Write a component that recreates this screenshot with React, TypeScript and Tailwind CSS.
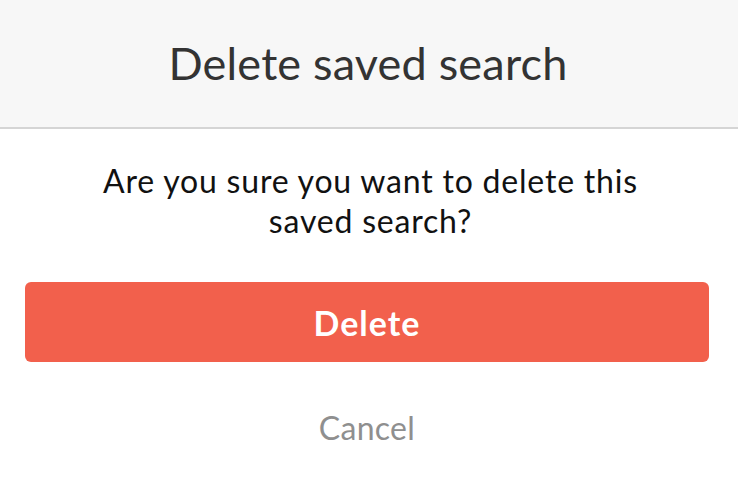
export default function App() {
  return (
    <div className="w-[738px] h-[487px] bg-white flex flex-col" style={{ fontFamily: 'Lato, "Noto Sans", sans-serif' }}>
      <div className="h-[129px] bg-[#f7f7f7] border-b-2 border-[#d5d5d5] flex items-center justify-center">
        <h1 className="text-[45px] text-[#333333] font-normal tracking-[0.2px] ml-[-2px]">Delete saved search</h1>
      </div>
      <div className="flex flex-col items-center pl-[25px] pr-[29px]">
        <p className="mt-[32px] pl-[7px] text-[32px] leading-[40px] text-[#111111] text-center tracking-[0.8px]">
          Are you sure you want to delete this
          <br />
          saved search?
        </p>
        <button className="mt-[41px] w-full h-[80px] rounded-[6px] bg-[#f2604c] text-white text-[34px] font-bold tracking-[1px]">
          Delete
        </button>
        <button className="mt-[42px] text-[32px] text-[#8f8f8f] tracking-[0.3px]">Cancel</button>
      </div>
    </div>
  );
}
